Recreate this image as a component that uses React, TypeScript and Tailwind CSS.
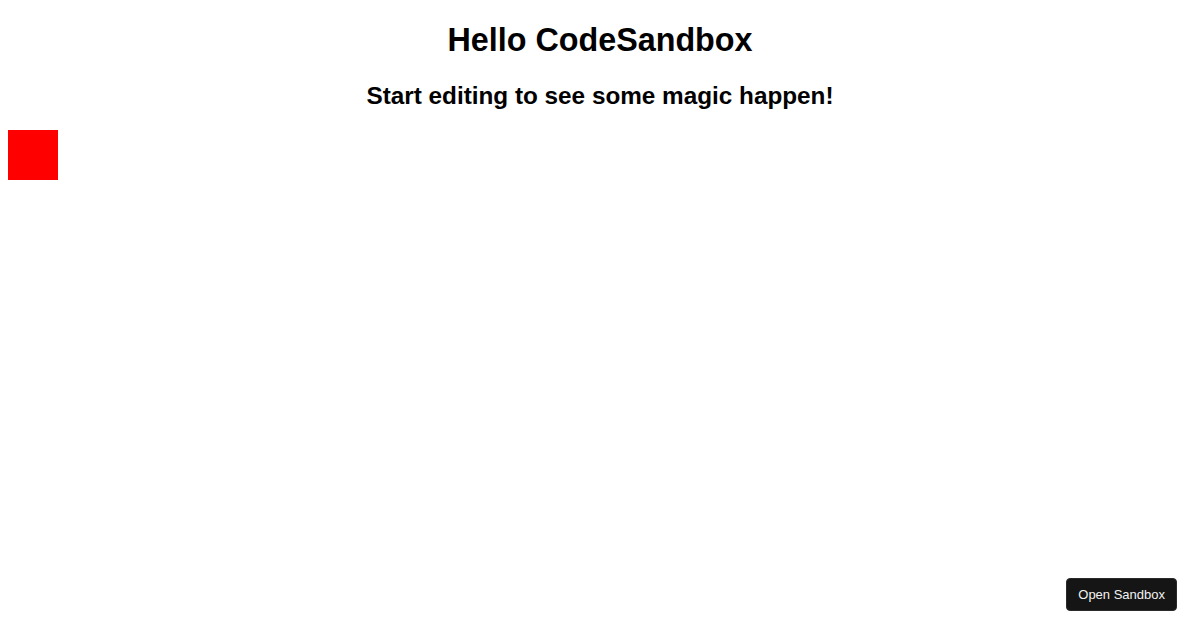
export default function App() {
  return (
    <div className="relative min-h-[630px] bg-white px-2 pt-[22px] font-['Liberation_Sans',Arial,sans-serif] text-black">
      <div className="text-center">
        <h1 className="text-[32.3px] font-bold leading-[36.8px]">Hello CodeSandbox</h1>
        <h2 className="mt-[23px] text-[24.3px] font-bold leading-[27.6px]">
          Start editing to see some magic happen!
        </h2>
      </div>

      <div className="mt-[20.6px] h-[50px] w-[50px] bg-[#ff0000]" />

      <button className="absolute bottom-[19px] right-[23px] h-[33px] rounded-[4px] border border-[#2a2a2a] bg-[#151515] px-[11px] text-[13px] text-[#f2f2f2]">
        Open Sandbox
      </button>
    </div>
  );
}
